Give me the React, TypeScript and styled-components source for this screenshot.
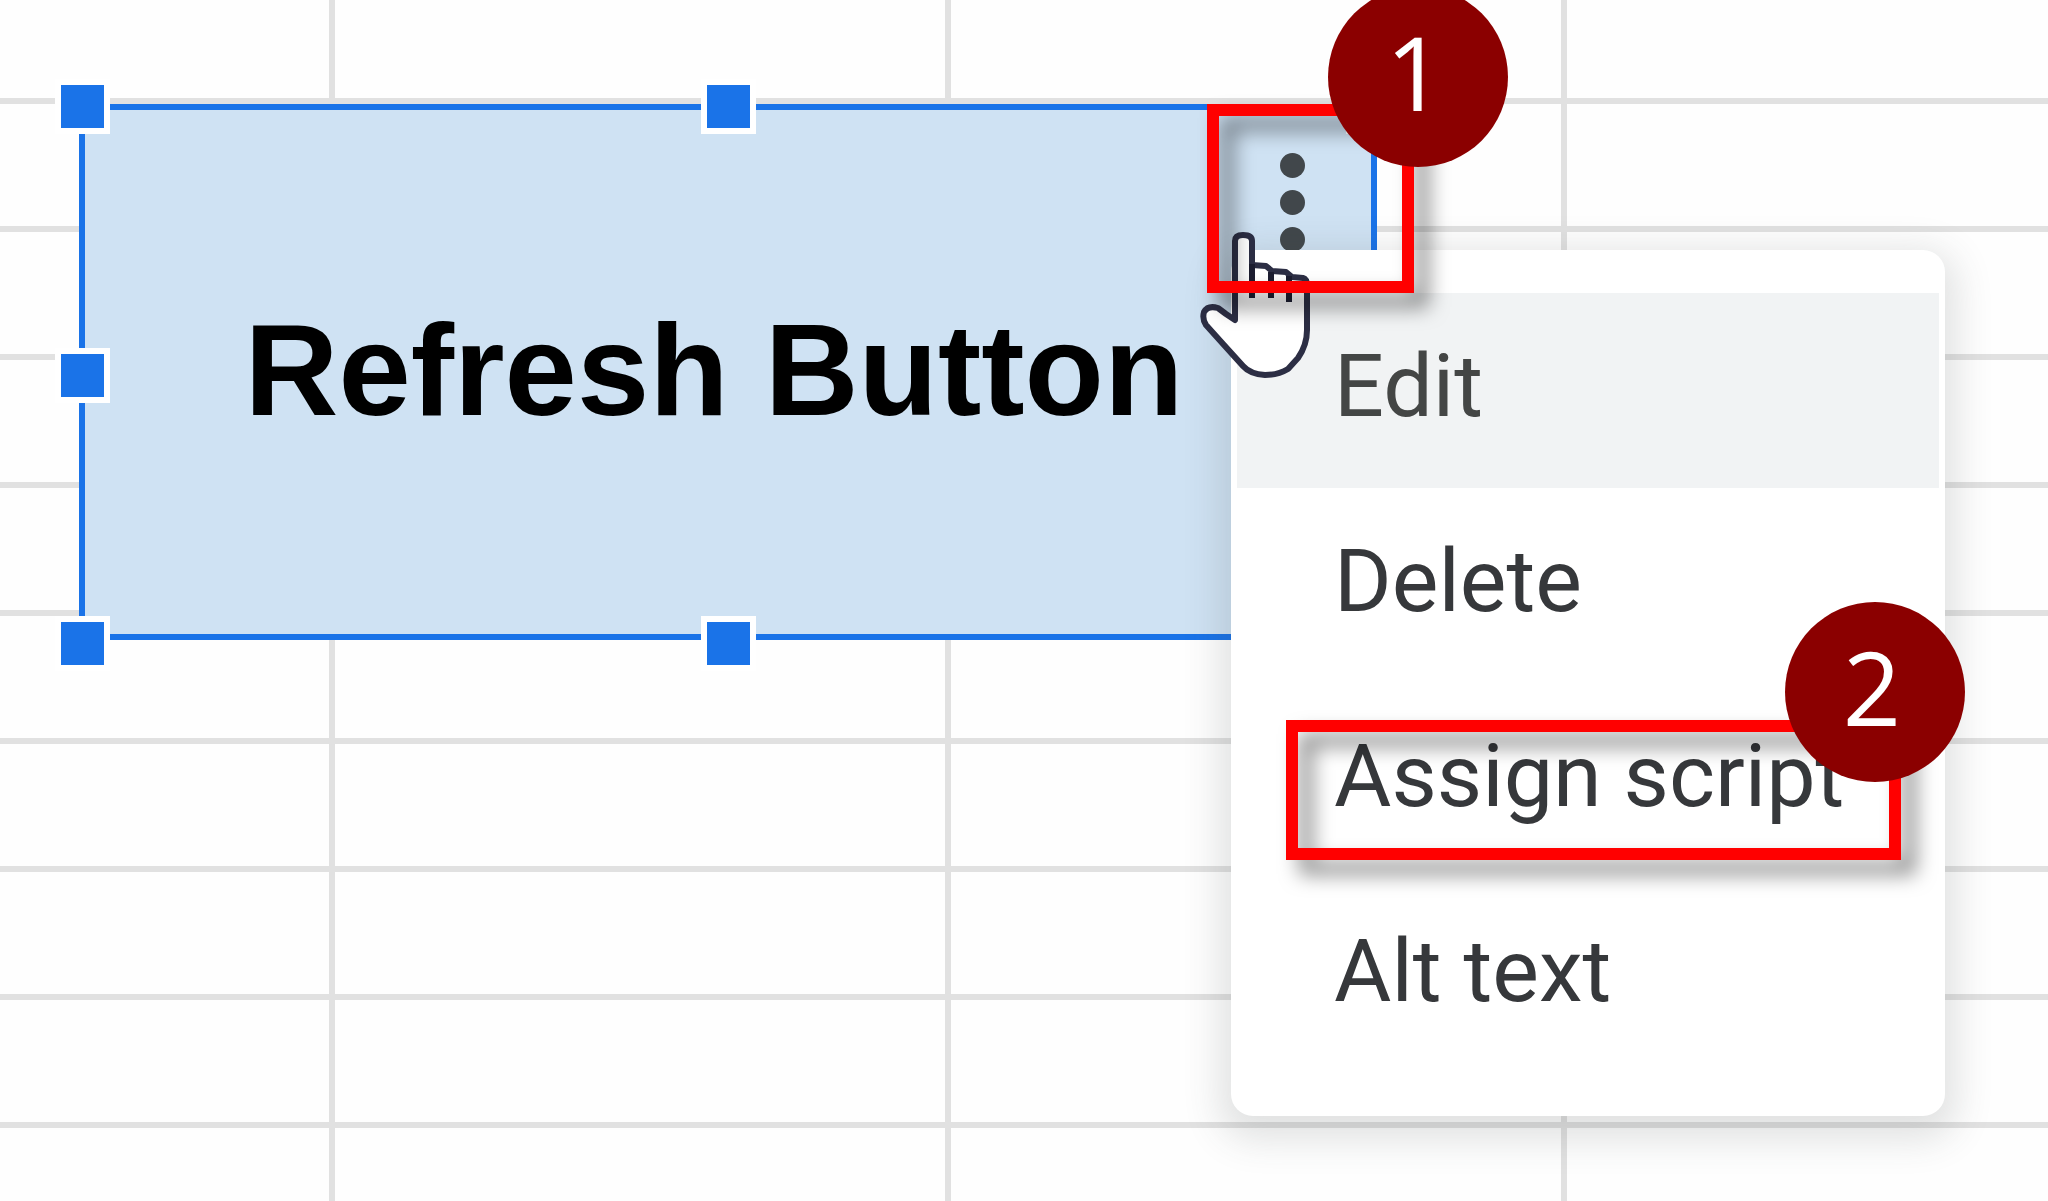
import React from "react";
import styled, { createGlobalStyle } from "styled-components";

const GlobalStyle = createGlobalStyle`
  *, *::before, *::after { box-sizing: border-box; }
  body { margin: 0; background: #fefefe; overflow: hidden; }
`;

const Sheet = styled.main`
  position: relative;
  width: 100%;
  min-height: 100vh;
  overflow: hidden;
  background: #fefefe;
  display: grid;
`;

const Cells = styled.div`
  display: grid;
  grid-template-columns: 335px 616px 616px 1fr;
  grid-template-rows: 104px repeat(8, 128px) 1fr;
  height: 100vh;
`;

const Cell = styled.div<{ $lastColumn: boolean; $lastRow: boolean }>`
  border: 0 solid #e1e1e1;
  border-bottom-width: ${(p) => (p.$lastRow ? 0 : 6)}px;
  border-right-width: ${(p) => (p.$lastColumn ? 0 : 6)}px;
`;

const Drawing = styled.section`
  position: absolute;
  left: 79px;
  top: 104px;
  width: 1298px;
  height: 536px;
`;

const DrawingButton = styled.button`
  display: flex;
  align-items: center;
  justify-content: center;
  width: 100%;
  height: 100%;
  margin: 0;
  padding: 0 28px 4px 0;
  border: 6px solid #1a73e8;
  border-radius: 0;
  background: #cfe2f3;
  color: #000;
  font: 700 130px/1 "Liberation Sans", Arial, sans-serif;
  white-space: nowrap;
`;

const Handles = styled.div`
  position: absolute;
  inset: -25px -24px -31px -24px;
  display: grid;
  grid-template-columns: repeat(3, 55px);
  grid-template-rows: repeat(3, 55px);
  justify-content: space-between;
  align-content: space-between;
  pointer-events: none;
`;

const Handle = styled.span`
  border: 6px solid #fff;
  background: #1a73e8;
`;

const MoreButton = styled.button`
  position: absolute;
  right: 48px;
  top: 24px;
  width: 74px;
  height: 148px;
  padding: 0;
  border: 0;
  background: transparent;
  display: flex;
  flex-direction: column;
  align-items: center;
  justify-content: center;
  gap: 12px;
`;

const Dot = styled.span`
  width: 25px;
  height: 25px;
  border-radius: 50%;
  background: #41474b;
`;

const Menu = styled.div`
  position: absolute;
  left: 1231px;
  top: 250px;
  width: 714px;
  padding: 43px 6px;
  border-radius: 22px;
  background: #fff;
  box-shadow: 0 12px 36px 12px rgba(60, 64, 67, 0.15);
  display: flex;
  flex-direction: column;
`;

const MenuItem = styled.button<{ $active: boolean }>`
  display: flex;
  align-items: center;
  height: 195px;
  padding: 0 0 10px 97px;
  border: 0;
  background: ${(p) => (p.$active ? "#f1f3f4" : "transparent")};
  color: ${(p) => (p.$active ? "#444645" : "#36383b")};
  font: 400 88px/1 Roboto, sans-serif;
  text-align: left;
  white-space: nowrap;
`;

const Pointer = styled.svg`
  position: absolute;
  left: 1196px;
  top: 226px;
  width: 120px;
  height: 160px;
  pointer-events: none;
`;

const Outline = styled.div<{ $x: number; $y: number; $w: number; $h: number }>`
  position: absolute;
  left: ${(p) => p.$x}px;
  top: ${(p) => p.$y}px;
  width: ${(p) => p.$w}px;
  height: ${(p) => p.$h}px;
  border: 12px solid #f00;
  filter: drop-shadow(14px 14px 10px rgba(0, 0, 0, 0.5));
  pointer-events: none;
`;

const Step = styled.div<{ $x: number; $y: number }>`
  position: absolute;
  left: ${(p) => p.$x}px;
  top: ${(p) => p.$y}px;
  width: 180px;
  height: 180px;
  padding: 0 6px 10px 0;
  border-radius: 50%;
  background: #8b0000;
  color: #fff;
  display: flex;
  align-items: center;
  justify-content: center;
  font: 500 102px/1 "Open Sans", sans-serif;
`;

const columns = [0, 1, 2, 3];
const rows = Array.from({ length: 10 }, (_, i) => i);

/* The centre slot of the 3 by 3 ring stays empty. */
const handleSlots = Array.from({ length: 9 }, (_, i) => i);

const menuItems = ["Edit", "Delete", "Assign script", "Alt text"];

export default function App() {
  return (
    <>
      <GlobalStyle />
      <Sheet>
        <Cells>
          {rows.map((r) =>
            columns.map((c) => (
              <Cell key={`${r}-${c}`} $lastColumn={c === 3} $lastRow={r === 9} />
            ))
          )}
        </Cells>

        <Drawing>
          <DrawingButton type="button">Refresh Button</DrawingButton>
          <Handles>
            {handleSlots.map((i) => (i === 4 ? <i key={i} /> : <Handle key={i} />))}
          </Handles>
          <MoreButton type="button" aria-label="More options">
            <Dot />
            <Dot />
            <Dot />
          </MoreButton>
        </Drawing>

        <Menu role="menu">
          {menuItems.map((label, i) => (
            <MenuItem key={label} type="button" role="menuitem" $active={i === 0}>
              {label}
            </MenuItem>
          ))}
        </Menu>

        <Pointer viewBox="1196 226 120 160" aria-hidden="true">
          <path
            d="M1235 320V241Q1235 235 1243 235Q1252 235 1252 241V265L1266 266L1272 271L1286 272L1292 277L1303 278Q1307 279 1307 286V330Q1307 345 1298 358L1288 369Q1278 375 1265 375Q1250 374 1243 366L1224 345L1206 325Q1202 319 1204 312Q1208 305 1218 308L1226 314Z"
            fill="#fff"
            stroke="#2c2e44"
            strokeWidth="6"
            strokeLinejoin="round"
          />
          <path
            d="M1252 264V298M1271 272V298M1289 276V302"
            fill="none"
            stroke="#1c1d30"
            strokeWidth="6"
          />
        </Pointer>

        <Outline $x={1207} $y={104} $w={207} $h={189} />
        <Outline $x={1286} $y={720} $w={615} $h={140} />
        <Step $x={1328} $y={-13}>1</Step>
        <Step $x={1785} $y={602}>2</Step>
      </Sheet>
    </>
  );
}
